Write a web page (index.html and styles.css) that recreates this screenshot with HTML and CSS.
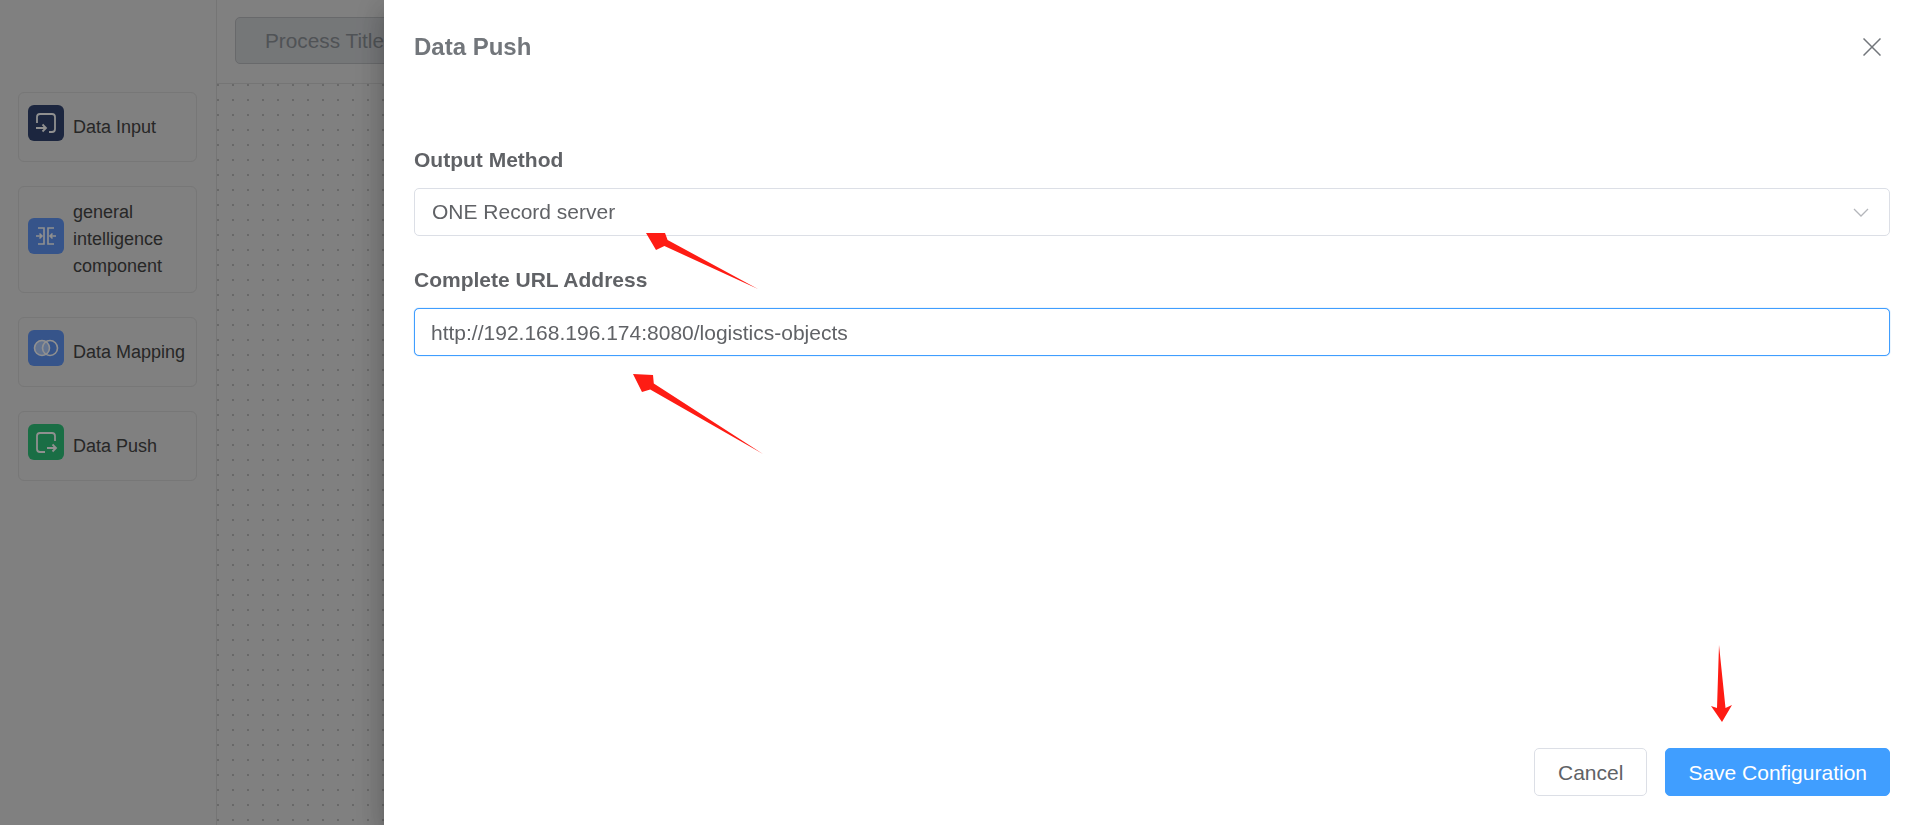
FILE: index.html
```html
<!DOCTYPE html>
<html lang="en">
<head>
    <meta charset="UTF-8">
    <meta name="viewport" content="width=device-width, initial-scale=1.0">
    <title>Data Push</title>
    <link rel="stylesheet" href="styles.css">
</head>
<body>
    <div class="app">
        <aside class="sidebar">
            <div class="card">
                <span class="card-icon icon-navy">
                    <svg viewBox="0 0 36 36" width="36" height="36" fill="none" stroke="#f0f0f0" stroke-width="1.8"><path d="M9 18V12a3 3 0 0 1 3-3h12a3 3 0 0 1 3 3v12a3 3 0 0 1-3 3h-3"/><path d="M8 23h10M14.5 19.5l3.5 3.5-3.5 3.5"/></svg>
                </span>
                <span class="card-text">Data Input</span>
            </div>
            <div class="card">
                <span class="card-icon icon-blue">
                    <svg viewBox="0 0 36 36" width="36" height="36" fill="none" stroke="#f0f0f0" stroke-width="1.6"><path d="M10 10h6v16h-6M26 10h-6v16h6"/><path d="M8 18h6M11.5 15.5l2.5 2.5-2.5 2.5M28 18h-6M24.5 15.5l-2.5 2.5 2.5 2.5"/></svg>
                </span>
                <span class="card-text">general intelligence component</span>
            </div>
            <div class="card">
                <span class="card-icon icon-blue">
                    <svg viewBox="0 0 36 36" width="36" height="36" fill="none" stroke="#f0f0f0" stroke-width="1.6"><circle cx="14" cy="18" r="7.5" fill="#fff" fill-opacity="0.45"/><circle cx="22" cy="18" r="7.5"/></svg>
                </span>
                <span class="card-text">Data Mapping</span>
            </div>
            <div class="card">
                <span class="card-icon icon-green">
                    <svg viewBox="0 0 36 36" width="36" height="36" fill="none" stroke="#f0f0f0" stroke-width="1.8"><path d="M27 17v-5a3 3 0 0 0-3-3H12a3 3 0 0 0-3 3v13a3 3 0 0 0 3 3h5"/><path d="M19 24h9M24.5 20.5l3.5 3.5-3.5 3.5"/></svg>
                </span>
                <span class="card-text">Data Push</span>
            </div>
        </aside>
        <main class="main">
            <div class="topbar">
                <input class="title-input" type="text" placeholder="Process Title">
            </div>
            <div class="canvas"></div>
        </main>
    </div>

    <div class="overlay"></div>

    <div class="drawer">
        <header class="drawer-header">
            <h2>Data Push</h2>
            <svg class="close" viewBox="0 0 18 18" width="18" height="18" stroke="#72767b" stroke-width="1.5"><path d="M0.5 0.5l17 17M17.5 0.5l-17 17"/></svg>
        </header>
        <div class="drawer-body">
            <div class="field">
                <label>Output Method</label>
                <div class="select">
                    <span>ONE Record server</span>
                    <svg viewBox="0 0 16 9" width="16" height="9" fill="none" stroke="#b4b6bb" stroke-width="1.3"><path d="M1 1l7 7 7-7"/></svg>
                </div>
            </div>
            <div class="field">
                <label for="url">Complete URL Address</label>
                <input id="url" class="url-input" type="text" value="http://192.168.196.174:8080/logistics-objects">
            </div>
        </div>
        <footer class="drawer-footer">
            <button class="btn">Cancel</button>
            <button class="btn btn-primary">Save Configuration</button>
        </footer>
    </div>

    <!-- red annotation arrows on top of the screenshot -->
    <svg class="arrows" viewBox="0 0 1920 825" width="1920" height="825" fill="#fe1c14">
        <polygon points="758,289 667.6,239.9 665,233 646,233 656,250 664.4,246.1"/>
        <polygon points="763,454 653.8,383.5 653,375 633,374 642,392 650.2,389.5"/>
        <polygon points="1719,645 1717,708 1711,706 1722,722 1732,705 1725.5,708"/>
    </svg>
</body>
</html>
```

FILE: styles.css
```css
* {
    box-sizing: border-box;
}
html, body {
    height: 100%;
}
body {
    margin: 0;
    font-family: "Liberation Sans", Arial, sans-serif;
    background-color: #d5d5d5;
    overflow: hidden;
}
.app {
    display: flex;
    height: 100%;
}
.sidebar {
    width: 217px;
    flex-shrink: 0;
    padding: 92px 19px 0 18px;
    border-right: 1px solid #c4c4c4;
    display: flex;
    flex-direction: column;
    gap: 24px;
}
.card {
    display: flex;
    align-items: center;
    gap: 9px;
    padding: 12px 9px;
    border: 1px solid #c6c6c6;
    border-radius: 6px;
}
.card-icon {
    width: 36px;
    height: 36px;
    flex-shrink: 0;
    margin-bottom: 8px;
    border-radius: 6px;
    display: flex;
}
.icon-navy {
    background-color: #2f4069;
}
.icon-blue {
    background-color: #5a8ce6;
}
.icon-green {
    background-color: #2cb873;
}
.card-text {
    font-size: 18px;
    line-height: 27px;
    color: #424242;
}
.main {
    flex: 1;
    display: flex;
    flex-direction: column;
}
.topbar {
    height: 84px;
    padding: 17px 18px;
    border-bottom: 1px solid #c4c4c4;
}
.title-input {
    width: 300px;
    height: 47px;
    padding: 0 29px;
    font-family: inherit;
    font-size: 20.8px;
    background-color: #c4c6c9;
    border: 1px solid #aeb0b3;
    border-radius: 5px;
}
.title-input::placeholder {
    color: #858a8f;
    opacity: 1;
}
.canvas {
    flex: 1;
    background-image: radial-gradient(circle at 1px 1px, #a6a6a6 0.6px, transparent 1.2px);
    background-size: 15px 15px;
}
.overlay {
    position: fixed;
    inset: 0;
    background-color: rgba(0, 0, 0, 0.4);
}
.drawer {
    position: fixed;
    top: 0;
    right: 0;
    bottom: 0;
    width: 1536px;
    padding: 0 30px 29px;
    background-color: #fff;
    box-shadow: 0 8px 10px -5px rgba(0,0,0,0.2), 0 16px 24px 2px rgba(0,0,0,0.14), 0 6px 30px 5px rgba(0,0,0,0.12);
    display: flex;
    flex-direction: column;
}
.drawer-header {
    height: 94px;
    padding-right: 9px;
    display: flex;
    align-items: center;
    justify-content: space-between;
}
.drawer-header h2 {
    margin: 0;
    font-size: 24px;
    color: #72767b;
}
.drawer-body {
    flex: 1;
    padding-top: 52px;
    display: flex;
    flex-direction: column;
    gap: 30px;
}
.field label {
    display: block;
    margin-bottom: 14px;
    font-size: 21px;
    line-height: 28px;
    font-weight: bold;
    color: #606266;
}
.select, .url-input {
    width: 100%;
    height: 48px;
    font-family: inherit;
    font-size: 21px;
    color: #606266;
    border-radius: 5px;
    background-color: #fff;
}
.select {
    display: flex;
    align-items: center;
    justify-content: space-between;
    padding: 0 20px 0 17px;
    border: 1px solid #dcdfe6;
}
.url-input {
    display: block;
    padding: 1px 16px 0;
    border: 1px solid #409eff;
    box-shadow: 0 0 1px #409eff;
    outline: none;
}
.drawer-footer {
    display: flex;
    justify-content: flex-end;
    gap: 18px;
}
.btn {
    height: 48px;
    padding: 1px 23px 0;
    font-family: inherit;
    font-size: 21px;
    color: #606266;
    background-color: #fff;
    border: 1px solid #dcdfe6;
    border-radius: 5px;
    cursor: pointer;
}
.btn-primary {
    padding: 1px 22px 0;
    color: #fff;
    background-color: #409eff;
    border-color: #409eff;
}
.arrows {
    position: fixed;
    top: 0;
    left: 0;
    pointer-events: none;
}
```
